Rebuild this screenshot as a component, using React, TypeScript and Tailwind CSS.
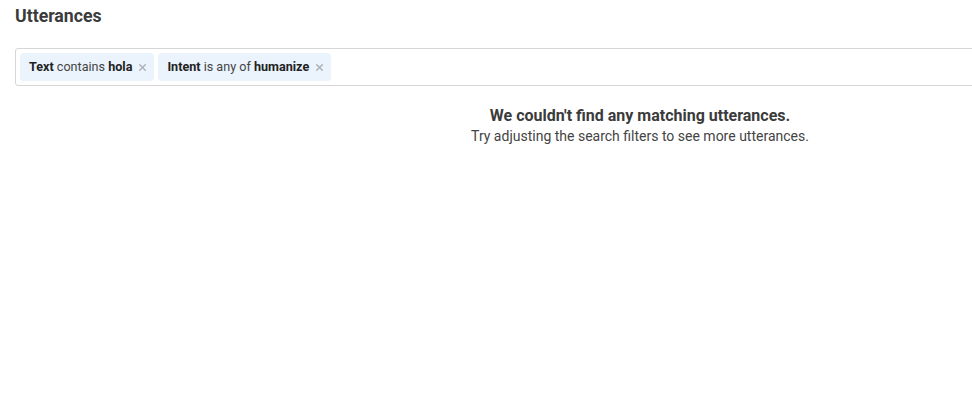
import { X } from 'lucide-react'

type Filter = {
  field: string
  op: string
  value: string
}

const filters: Filter[] = [
  { field: 'Text', op: 'contains', value: 'hola' },
  { field: 'Intent', op: 'is any of', value: 'humanize' },
]

function FilterChip({ field, op, value }: Filter) {
  return (
    <div className="flex h-[28px] items-center gap-[5px] rounded-[4px] bg-[#ebf3fd] pl-[9px] pr-[6px] text-[12.6px] text-[#444]">
      <span>
        <span className="font-bold text-[#222]">{field}</span> {op}{' '}
        <span className="font-bold text-[#222]">{value}</span>
      </span>
      <X className="h-[11px] w-[11px] text-[#aab0b8]" strokeWidth={3} />
    </div>
  )
}

export default function App() {
  return (
    <div className="h-[402px] w-[972px] overflow-hidden bg-white font-['Roboto',sans-serif]">
      <div className="w-[1265px] pl-[15px] pt-[5px]">
        <h1 className="text-[17.7px] font-bold leading-[22px] text-[#3b3b3b]">Utterances</h1>
        <div className="mt-[21px] flex h-[38px] items-center gap-[4px] rounded-l-[3px] border border-[#d6d6d6] px-[4px]">
          {filters.map((f) => (
            <FilterChip key={f.field} {...f} />
          ))}
        </div>
        <div className="mt-[20px] flex flex-col items-center text-center">
          <p className="text-[16px] font-bold leading-[20px] text-[#3b3b3b]">
            We couldn't find any matching utterances.
          </p>
          <p className="text-[14px] leading-[21px] text-[#444]">
            Try adjusting the search filters to see more utterances.
          </p>
        </div>
      </div>
    </div>
  )
}
